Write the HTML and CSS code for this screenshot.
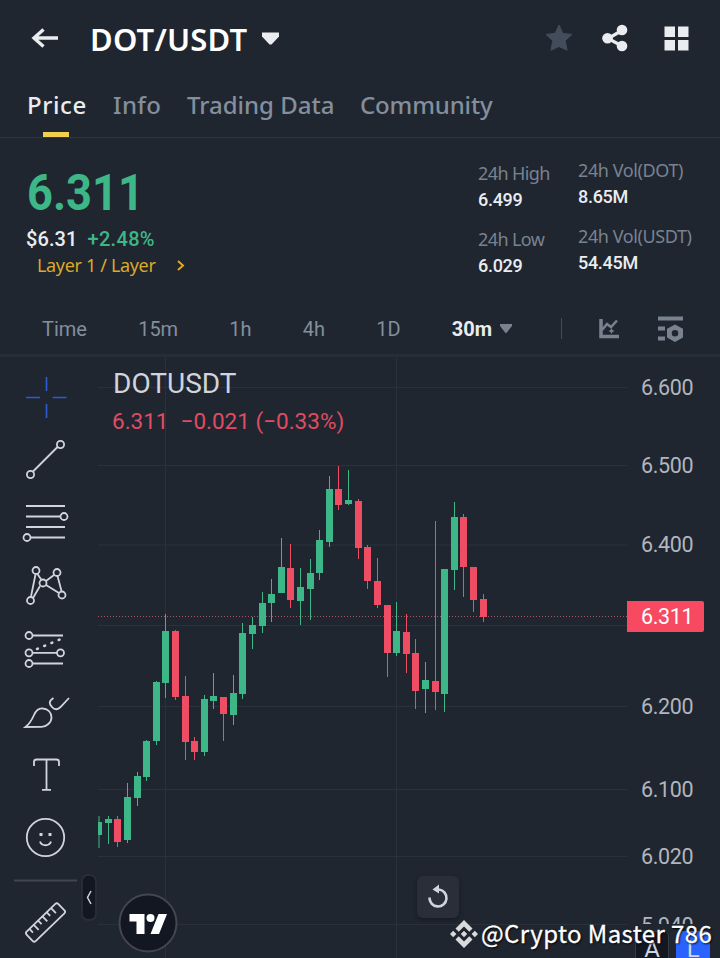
FILE: index.html
```html
<!DOCTYPE html>
<html lang="en">
<head>
<meta charset="utf-8">
<title>DOT/USDT</title>
<link rel="stylesheet" href="styles.css">
</head>
<body>
<div class="app">
  <header class="topbar">
    <svg class="back" width="28" height="22" viewBox="0 0 28 22"><path d="M12.500 2.500 3 11l9.500 8.500M3.500 11H27" fill="none" stroke="#eaecef" stroke-width="3.400"/></svg>
    <h1 class="pair">DOT/USDT</h1>
    <svg class="caret" width="17" height="13" viewBox="0 0 17 13"><path d="M0 .5h17v4L9.500 12.500h-2L0 4.500z" fill="#eaecef"/></svg>
    <div class="actions">
      <svg width="28" height="28" viewBox="0 0 28 28"><path d="m14 1 3.800 8.400 9.200 1-6.800 6.300 1.900 9.600-8.100-3.800-8.100 3.800 1.900-9.600L1 10.400l9.200-1z" fill="#434c5a" stroke="#434c5a" stroke-linejoin="round"/></svg>
      <svg width="28" height="28" viewBox="0 0 28 28"><path d="M21 6.500 7 14.500l14 7.500" fill="none" stroke="#eaecef" stroke-width="3.200"/><g fill="#eaecef"><circle cx="21" cy="6" r="5.300"/><circle cx="6.500" cy="14.300" r="5.300"/><circle cx="21" cy="22" r="5.300"/></g></svg>
      <svg width="25" height="25" viewBox="0 0 25 25"><path d="M.5.500H11V11H.5zM14 .5h10.500V11H14zM.5 14H11v10.500H.5zM14 14h10.500v10.500H14z" fill="#eaecef"/></svg>
    </div>
  </header>
  <nav class="tabs">
    <span class="tab active t-price">Price</span>
    <span class="tab t-info">Info</span>
    <span class="tab t-data">Trading Data</span>
    <span class="tab t-comm">Community</span>
  </nav>
  <section class="ticker">
    <div class="quote">
      <div class="last">6.311</div>
      <div class="sub"><span class="usd">$6.31</span><span class="pct">+2.48%</span></div>
      <div class="tag"><span>Layer 1 / Layer</span><svg width="8" height="11" viewBox="0 0 8 11"><path d="m1 1 5 4.500L1 10" fill="none" stroke="#dca928" stroke-width="2"/></svg></div>
    </div>
    <dl class="stats s-left">
      <dt>24h High</dt><dd>6.499</dd>
      <dt>24h Low</dt><dd>6.029</dd>
    </dl>
    <dl class="stats s-right">
      <dt>24h Vol(DOT)</dt><dd>8.65M</dd>
      <dt>24h Vol(USDT)</dt><dd>54.45M</dd>
    </dl>
  </section>
  <nav class="intervals">
    <span class="time">Time</span><span>15m</span><span>1h</span><span>4h</span><span>1D</span>
    <span class="current">30m</span>
    <svg class="drop" width="12" height="9" viewBox="0 0 12 9"><path d="M0 0h12v2L6.500 9h-1L0 2z" fill="#79828f"/></svg>
    <i class="sep"></i>
    <svg class="ind" width="20" height="20" viewBox="0 0 20 20"><path d="M2 0v17.500h18" fill="none" stroke="#79828f" stroke-width="3.500"/><path d="m3 11 5-6 4 3 6-6.500" fill="none" stroke="#79828f" stroke-width="2.500"/><path d="m12.500 9 1 2 2 1-2 1-1 2-1-2-2-1 2-1z" fill="#79828f"/></svg>
    <svg class="cfg" width="25" height="26" viewBox="0 0 25 26"><path d="M0 2.500h25M0 12.500h7M0 22.500h7" stroke="#79828f" stroke-width="4"/><path fill-rule="evenodd" d="m17 8.500 8 4.200v8.800l-8 4.500-8-4.500v-8.800zm0 5.500a3.300 3.300 0 1 0 0 6.600 3.300 3.300 0 0 0 0-6.600z" fill="#79828f"/></svg>
  </nav>
  <main class="chart">
    <aside class="tools">
      <svg width="98" height="601" viewBox="0 357 98 601" fill="none" stroke="#d1d4dc" stroke-width="1.800">
        <path d="M46.500 377v14M46.500 404v14M26 397.500h14M52.500 397.500h14" stroke="#2d5ad0" stroke-width="1.700"/>
        <g><path d="m33 471.500 24.500-24.500"/><circle cx="30.500" cy="474.500" r="3.600"/><circle cx="60.500" cy="444.500" r="3.600"/></g>
        <g><path d="M26 506h39M26 516.500h34M26 527h39M31 537.500h34"/><circle cx="64" cy="516.500" r="3.500"/><circle cx="27" cy="537.500" r="3.500"/></g>
        <g><path d="m35.500 574.500-4.500 22M37.500 574l4 6M40 586l-7 12M46 581l8-6M57.500 576l4 15M46 585l13 8"/><circle cx="36" cy="570.500" r="3.500"/><circle cx="57" cy="572.500" r="3.500"/><circle cx="43" cy="583" r="3.500"/><circle cx="62" cy="595" r="3.500"/><circle cx="30.500" cy="600.500" r="3.500"/></g>
        <g><path d="M33 635.500h30M33 652.800h24M33 663.500h30"/><path d="m37 649 24-10" stroke-width="2.500" stroke-linecap="round" stroke-dasharray="1 6.800"/><circle cx="29" cy="635.500" r="3.500"/><circle cx="29" cy="652.800" r="3.500"/><circle cx="60.500" cy="652.800" r="3.500"/><circle cx="29" cy="663.500" r="3.500"/></g>
        <path d="M25.500 727c4-3 6.500-7.500 8.500-12 2-4.500 5.500-7 9-6.500 5 .5 8.500 4 8.500 9s-5 9.300-10 9.300zM53.500 698c-5 3-4.500 6-1.500 9 3 3.500 6 2.500 8.500 0l8.500-9"/>
        <path d="M34 766v-4q0-2.500 2.500-2.500h20q2.500 0 2.500 2.500v4M46.500 759.500v30M42 789.800h9"/>
        <circle cx="45.500" cy="837.500" r="18.700"/><path d="M40 841.500c1.500 5 9.500 5 11 0"/><path d="M41 833v3M50 833v3" stroke-width="3"/>
        <path d="M14 880.500h63" stroke="#434651"/>
        <g transform="rotate(-44 45.500 922.500)"><rect x="23.500" y="916" width="44" height="13" rx="2"/><path d="M29.500 916v5M35.500 916v7M41.500 916v5M47.500 916v7M53.500 916v5M59.500 916v7"/></g>
        <rect x="82" y="875" width="14" height="45" rx="6" fill="#131722" stroke="#2a2e39"/>
        <path d="m91 891-3.500 6.500L91 904" stroke-width="1.500"/>
      </svg>
    </aside>
    <div class="plot">
      <svg width="529" height="601" viewBox="98 357 529 601" fill="none">
        <path d="M98 387.500h529M98 465.500h529M98 545h529M98 625.500h529M98 706.500h529M98 789.500h529M98 856.500h529M98 924.500h529M165.500 354v604M396.500 354v604" stroke="#2a313b"/>
        <path d="M98 616.500h529" stroke="#a55463" stroke-dasharray="1 2"/>
        <g stroke="#3db787">
          <path d="M99 816v32M108.500 816v28M127.500 783v60M137.500 772v34M146.500 740v41M156.500 681v64M165.500 614v84M204.500 695v61M213.500 673v36M233.500 675v50M242.500 623v76M252.500 617v32M262.500 592v41M271.500 579v43M281.500 538v55M300.500 568v57M310.500 559v61M319.500 530v50M329.500 476v71M348.500 470v35M396.500 602v54M425.500 662v51M444.500 569v143M454.500 502v88"/>
          <path stroke-width="7" d="M98.500 822v13M108.500 819v4M127.500 797v43M137.500 776v22M146.500 741v36M156.500 682v59M165.500 631v52M204.500 699v53M213.500 696v5M233.500 693v22M242.500 633v61M252.500 625v9M262.500 603v23M271.500 594v9M281.500 567v26M300.500 587v14M310.500 573v16M319.500 540v33M329.500 489v53M348.500 500v4M396.500 631v22M425.500 680v9M444.500 569v125M454.500 517v53"/>
        </g>
        <g stroke="#ee4d64">
          <path d="M117.500 816v31M175.500 630v70M185.500 676v84M194.500 737v23M223.500 697v44M290.500 544v64M338.500 466v44M358.500 499v60M367.500 545v44M377.500 558v50M387.500 605v72M406.500 614v59M415.500 639v70M435.500 521v189M463.500 514v83M473.500 567v45M483.500 594v28"/>
          <path stroke-width="7" d="M117.500 819v23M175.500 631v66M185.500 696v46M194.500 741v11M223.500 697v17M290.500 568v32M338.500 489v16M358.500 501v47M367.500 547v34M377.500 581v24M387.500 605v48M406.500 632v22M415.500 653v38M435.500 681v11M463.500 517v50M473.500 567v33M483.500 599v18"/>
        </g>
      </svg>
      <div class="legend"><div class="symbol">DOTUSDT</div><div class="change"><span>6.311</span><span>−0.021 (−0.33%)</span></div></div>
      <svg class="tv" width="60" height="60" viewBox="0 0 60 60"><circle cx="30" cy="30" r="28.500" fill="#131722" stroke="#434651" stroke-width="2"/><path d="M11.500 21h15v20h-8V28.500h-7zM40.500 21h8.500l-8 20h-8.500z" fill="#fff"/><circle cx="32.500" cy="25" r="4" fill="#fff"/></svg>
      <div class="reset"><svg width="24" height="26" viewBox="0 0 24 26"><path d="M3.500 13.500a8.500 8.500 0 1 0 9.500-8" fill="none" stroke="#d1d4dc" stroke-width="2.600"/><path d="M6.500 5.500 13 .5v9z" fill="#d1d4dc"/></svg></div>
    </div>
    <div class="axis">
      <span class="a1">6.600</span><span class="a2">6.500</span><span class="a3">6.400</span><span class="now">6.311</span><span class="a4">6.200</span><span class="a5">6.100</span><span class="a6">6.020</span><span class="a7">5.940</span>
      <div class="modes"><b>A</b><b class="log">L</b></div>
    </div>
    <div class="watermark"><svg width="28" height="28" viewBox="0 0 28 28"><path d="m14 0 8.500 8.500-3.200 3.200L14 6.400l-5.300 5.300-3.200-3.200zM14 28l8.500-8.500-3.200-3.200-5.300 5.300-5.300-5.300-3.200 3.200zM3.200 10.800 6.400 14l-3.200 3.200L0 14zM24.800 10.800 28 14l-3.200 3.200-3.200-3.200zM14 10.800l3.200 3.200-3.200 3.200-3.200-3.200z" fill="#d9dadc"/></svg><span>@Crypto Master 786</span></div>
  </main>
</div>
</body>
</html>
```
FILE: styles.css
```css
* { box-sizing: border-box; }
body { margin: 0; background: #1f2630; color: #eaecef; font-family: Roboto, "Liberation Sans", sans-serif; }
svg { display: block; flex: none; }
.app { width: 720px; height: 958px; overflow: hidden; display: flex; flex-direction: column; }
.topbar { height: 80px; display: flex; align-items: center; padding: 0 31px 4px 31px; }
.pair { margin: 2px 0 0 31px; width: 157px; font: 600 31px/40px "Noto Sans", sans-serif; letter-spacing: .2px; white-space: nowrap; color: #fff; }
.caret { margin-left: 15px; }
.actions { margin-left: auto; display: flex; align-items: center; gap: 28px; }
.actions svg:last-child { margin-left: 7px; }
.tabs { height: 58px; display: flex; border-bottom: 1px solid #2e3640; padding: 10px 0 0 27px; font: 500 24px/30px "Noto Sans", sans-serif; color: #848e9c; white-space: nowrap; }
.tab { position: relative; }
.t-price { width: 86px; color: #eaecef; letter-spacing: .6px; }
.t-info { width: 74px; letter-spacing: .4px; }
.t-data { width: 173px; }
.t-comm { letter-spacing: -.15px; }
.active::after { content: ""; position: absolute; left: 16px; top: 42px; width: 26px; height: 5px; background: #f0d04c; }
.ticker { height: 165px; display: flex; padding-left: 27px; white-space: nowrap; }
.quote { width: 451px; padding-top: 26px; }
.last { font: 700 50px/58px Roboto, sans-serif; color: #3db787; transform: scaleX(.905); transform-origin: 0 50%; }
.sub { display: flex; gap: 10px; margin: 4px 0 0 -1px; line-height: 26px; font-size: 20px; }
.usd { font-weight: 500; letter-spacing: .1px; }
.pct { color: #3db787; letter-spacing: .3px; font-weight: 500; }
.tag { display: flex; align-items: center; gap: 21px; padding-left: 10px; font: 18px/27px "Noto Sans", sans-serif; letter-spacing: -.34px; color: #dca928; }
.stats { margin: 0; }
.s-left { width: 100px; padding-top: 22px; }
.s-right { padding-top: 19px; }
.stats dt { font: 18px/26px "Noto Sans", sans-serif; letter-spacing: -.4px; color: #79828f; }
.s-left dt { letter-spacing: -.6px; }
.stats dd { height: 26px; margin: 0 0 14px; padding-top: 1px; font: 500 18px/25px Roboto, sans-serif; letter-spacing: -.3px; }
.intervals { height: 54px; display: flex; align-items: center; padding: 0 35px 0 42px; border-bottom: 3px solid #272d37; font: 20px/26px Roboto, sans-serif; color: #848e9c; gap: 51.200px; }
.current { color: #eaecef; font-weight: 700; }
.drop { margin-left: -43px; }
.sep { width: 1px; height: 21px; background: #434c5a; margin-left: -2px; }
.ind { margin-left: -15px; }
.cfg { margin-left: -11.500px; }
.chart { position: relative; height: 601px; display: grid; grid-template-columns: 98px 529px 93px; }
.plot { position: relative; }
.legend { position: absolute; left: 15px; top: 10px; white-space: nowrap; }
.symbol { font-size: 28px; line-height: 34px; color: #d1d4dc; }
.change { display: flex; gap: 12px; margin: 6px 0 0 -1px; font-size: 22.500px; line-height: 28px; color: #e04c62; }
.tv { position: absolute; left: 20px; top: 536px; }
.reset { position: absolute; left: 319px; top: 519px; width: 42px; height: 42px; border-radius: 6px; background: #2a2e39; display: grid; place-items: center; box-shadow: 0 2px 4px #161b23; }
.axis { position: relative; display: flex; flex-direction: column; font-size: 21.500px; line-height: 30px; letter-spacing: -.35px; color: #b2b5be; }
.axis span { padding-left: 14px; height: 30px; }
.a1 { margin-top: 16px; }
.a2 { margin-top: 48px; }
.a3 { margin-top: 49px; }
.axis .now { margin-top: 41px; width: 77px; height: 31px; line-height: 32px; background: #f7495f; color: #fff; border-radius: 0 2px 2px 0; }
.a4 { margin-top: 60px; }
.a5 { margin-top: 53px; }
.a6 { margin-top: 37px; }
.a7 { margin-top: 39px; }
.modes { position: absolute; left: 8px; top: 567px; display: flex; gap: 7px; padding-top: 7px; height: 34px; width: 80px; background: #1f2630; overflow: hidden; }
.modes b { width: 34px; height: 40px; border: 1px solid #363a45; border-radius: 5px; background: #131722; font: 24px/34px Roboto, sans-serif; text-align: center; color: #d1d4dc; }
.modes .log { background: #2962ff; border-color: #2962ff; }
.watermark { position: absolute; left: 450px; top: 556px; display: flex; align-items: center; gap: 3px; font: 400 24px/40px "Noto Sans CJK SC", sans-serif; letter-spacing: .4px; color: #fff; white-space: nowrap; text-shadow: 1px 1px 2px #000; -webkit-text-stroke: .3px #fff; }
.watermark svg { margin-top: 1px; }
```
